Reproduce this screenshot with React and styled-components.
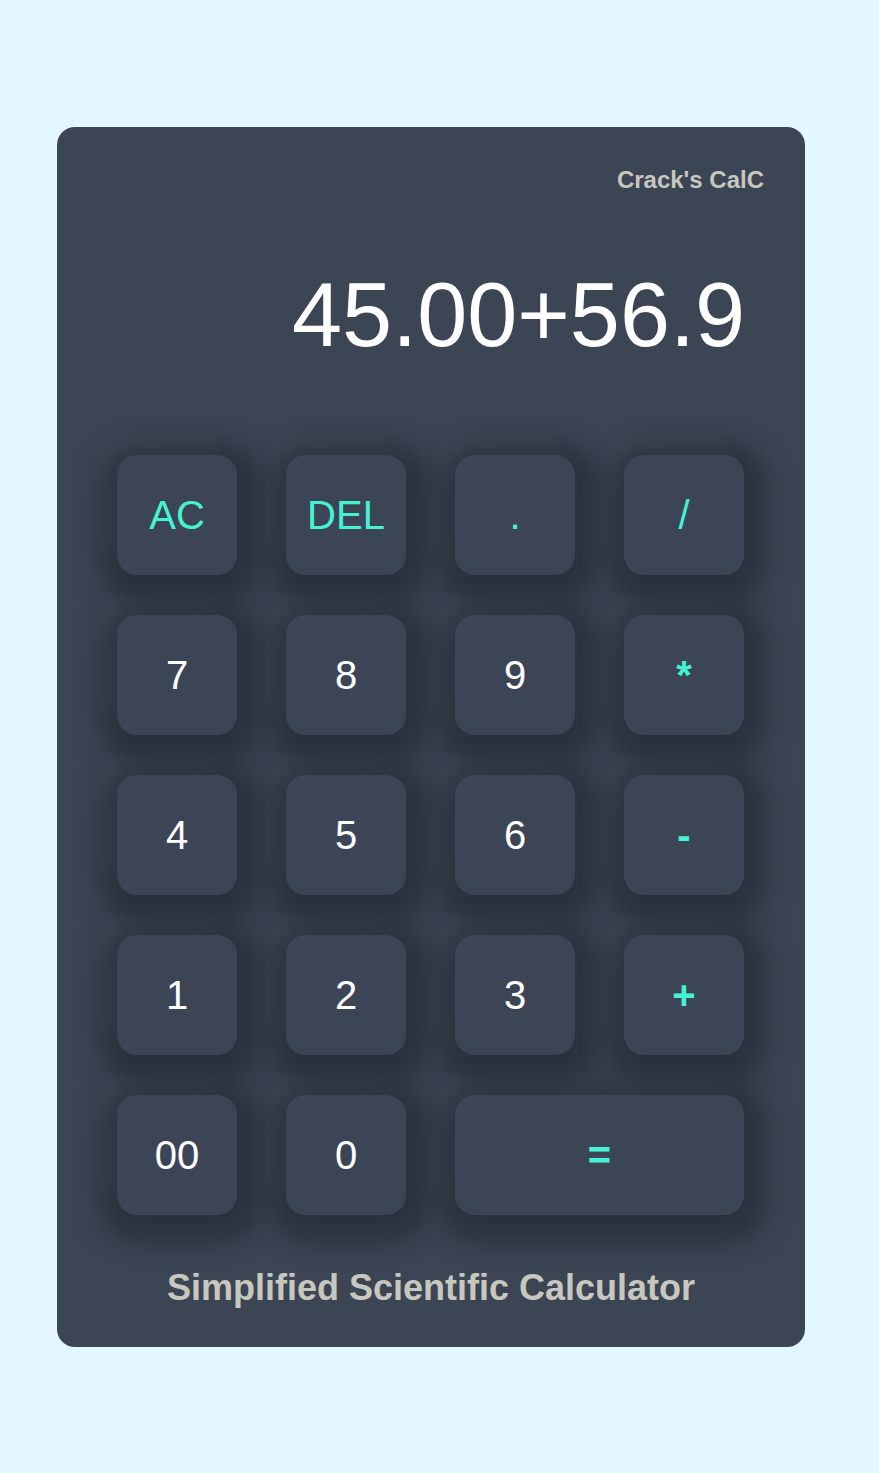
import React from 'react';
import styled, { createGlobalStyle } from 'styled-components';

const GlobalStyle = createGlobalStyle`
  html, body {
    margin: 0;
    padding: 0;
    background: #e3f7ff;
    font-family: "Liberation Sans", Arial, Helvetica, sans-serif;
  }
`

const Page = styled.div`
  min-height: 1473px;
  padding: 127px 0 0 57px;
  box-sizing: border-box;
`

const Card = styled.div`
  width: 748px;
  height: 1220px;
  box-sizing: border-box;
  background: #3c4554;
  border-radius: 18px;
  padding: 39px 41px 0 60px;
  display: flex;
  flex-direction: column;
`

const Brand = styled.div`
  text-align: right;
  font-size: 24px;
  font-weight: bold;
  color: #c8c7bf;
  line-height: 28px;
`

const Screen = styled.div`
  margin-top: 76px;
  padding-right: 19px;
  text-align: right;
  font-size: 90px;
  line-height: 90px;
  color: #ffffff;
  white-space: nowrap;
`

const Keypad = styled.div`
  margin-top: 95px;
  display: grid;
  grid-template-columns: repeat(4, 120px);
  grid-auto-rows: 120px;
  column-gap: 49px;
  row-gap: 40px;
`

const Key = styled.button`
  grid-column: ${p => (p.$wide ? 'span 2' : 'auto')};
  border: none;
  border-radius: 20px;
  background: #3c4555;
  color: ${p => (p.$accent ? '#45f3d2' : '#ffffff')};
  font-family: inherit;
  font-size: 40px;
  font-weight: ${p => (p.$op ? 'bold' : 'normal')};
  padding: 0;
  cursor: pointer;
  box-shadow: 3px 8px 24px 20px rgba(34, 38, 47, 0.62),
    -16px -16px 18px rgba(255, 255, 255, 0.04);
  display: flex;
  align-items: center;
  justify-content: center;
`

const Footer = styled.div`
  margin-top: 52px;
  margin-right: 19px;
  text-align: center;
  font-size: 36px;
  font-weight: bold;
  color: #c8c7bf;
  line-height: 41px;
`

const keys = [
  { label: 'AC', accent: true },
  { label: 'DEL', accent: true },
  { label: '.', accent: true },
  { label: '/', accent: true },
  { label: '7' },
  { label: '8' },
  { label: '9' },
  { label: '*', accent: true, op: true },
  { label: '4' },
  { label: '5' },
  { label: '6' },
  { label: '-', accent: true, op: true },
  { label: '1' },
  { label: '2' },
  { label: '3' },
  { label: '+', accent: true, op: true },
  { label: '00' },
  { label: '0' },
  { label: '=', accent: true, op: true, wide: true },
]

export default function App() {
  return (
    <>
      <GlobalStyle />
      <Page>
        <Card>
          <Brand>Crack's CalC</Brand>
          <Screen>45.00+56.9</Screen>
          <Keypad>
            {keys.map(k => (
              <Key key={k.label} $accent={k.accent} $op={k.op} $wide={k.wide}>
                {k.label}
              </Key>
            ))}
          </Keypad>
          <Footer>Simplified Scientific Calculator</Footer>
        </Card>
      </Page>
    </>
  )
}
